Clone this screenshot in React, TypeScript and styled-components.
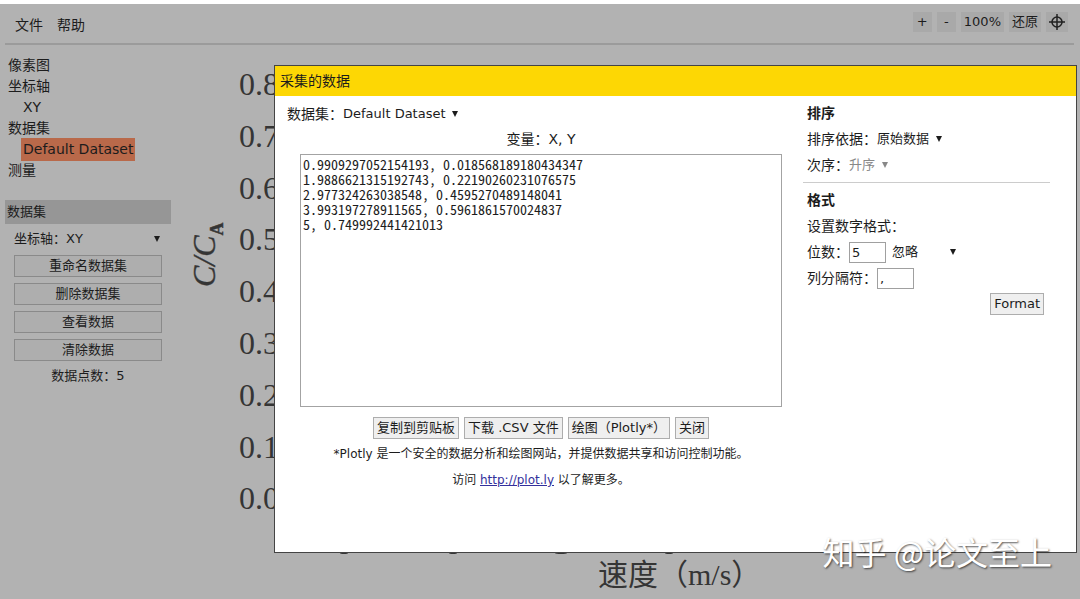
import React from "react";
import styled, { createGlobalStyle } from "styled-components";

const GlobalStyle = createGlobalStyle`
  *, *::before, *::after { box-sizing: border-box; }
  body {
    margin: 0;
    background: #fff;
    color: #1c1c1c;
    font-family: "DejaVu Sans", "Noto Sans CJK SC", sans-serif;
    font-size: 14px;
    line-height: 20px;
  }
  button, select, input, textarea { font-family: inherit; color: inherit; margin: 0; }
`;

const Page = styled.div`
  position: relative;
  display: flex;
  flex-direction: column;
  min-height: 100vh;
  border-top: 4px solid #fff;
  background: #b2b2b2;
  overflow: hidden;
`;

const TopBar = styled.header`
  display: flex;
  justify-content: space-between;
  align-items: flex-start;
  height: 41px;
  margin: 0 6px 0 5px;
  padding: 8px 6px 0 10px;
  border-bottom: 2px solid #9b9b9b;
`;

const Menu = styled.nav`
  display: flex;
  gap: 14px;
  padding-top: 3px;
`;

const MenuItem = styled.button`
  padding: 0;
  border: 0;
  background: none;
  font-size: 14px;
  line-height: 20px;
`;

const ZoomTools = styled.div`
  display: flex;
  gap: 5px;
`;

const ToolButton = styled.button`
  display: flex;
  align-items: center;
  justify-content: center;
  min-width: 19px;
  height: 20px;
  padding: 0 3px;
  border: 0;
  background: #a9a9a9;
  font-size: 13px;
  line-height: 20px;
`;

const Workspace = styled.main`
  display: flex;
  flex: 1;
`;

const Sidebar = styled.aside`
  flex: none;
  width: 178px;
  padding: 10px 7px 0 5px;
`;

const Tree = styled.ul`
  margin: 0;
  padding: 0 0 0 3px;
  list-style: none;
  line-height: 21px;
`;

const TreeItem = styled.li<{ $child?: boolean }>`
  display: flex;
  align-items: center;
  height: 21px;
  padding-left: ${(p) => (p.$child ? 13 : 0)}px;
`;

const TreeLabel = styled.span<{ $active?: boolean }>`
  padding: 1px 2px;
  background: ${(p) => (p.$active ? "#b9694a" : "transparent")};
`;

const PanelTitle = styled.h2`
  margin: 19px 0 4px;
  padding: 0 2px;
  background: #969696;
  font-size: 13px;
  font-weight: 400;
  line-height: 24px;
`;

const PanelBody = styled.div`
  display: flex;
  flex-direction: column;
  gap: 6px;
  padding: 0 9px;
  font-size: 13px;
`;

const AxisRow = styled.div`
  display: flex;
  align-items: center;
  height: 21px;
`;

const PanelButton = styled.button`
  height: 22px;
  padding: 0;
  border: 1px solid #8a8a8a;
  background: #aeaeae;
  font-size: 13px;
  line-height: 20px;
`;

const PointCount = styled.div`
  text-align: center;
  line-height: 18px;
`;

const SelectBox = styled.span<{ $width?: number; $grow?: boolean; $muted?: boolean }>`
  display: inline-grid;
  grid-template-columns: 1fr 10px;
  align-items: center;
  flex: ${(p) => (p.$grow ? 1 : "none")};
  width: ${(p) => (p.$width ? `${p.$width}px` : "auto")};
  color: ${(p) => (p.$muted ? "#888" : "inherit")};

  select {
    grid-area: 1 / 1 / 2 / 3;
    width: 100%;
    padding: 0 14px 0 0;
    border: 0;
    background: none;
    appearance: none;
    font-size: 13px;
    line-height: 20px;
    opacity: 1;
  }

  svg {
    grid-area: 1 / 2 / 2 / 3;
    pointer-events: none;
  }
`;

const Plot = styled.svg`
  flex: none;
  display: block;
  width: 900px;
  height: 554px;
  font-family: "Liberation Serif", "Noto Sans CJK SC", serif;
  font-size: 32px;
  fill: #353535;
`;

const Dialog = styled.section`
  position: absolute;
  top: 61px;
  left: 274px;
  right: 3px;
  min-height: 488px;
  border: 1px solid #444;
  background: #fff;
`;

const DialogTitle = styled.h1`
  margin: 0;
  padding: 0 5px;
  background: #fdd704;
  font-size: 14px;
  font-weight: 400;
  line-height: 30px;
`;

const DialogBody = styled.div`
  display: flex;
  gap: 21px;
  padding: 5px 26px 0 12px;
`;

const DataColumn = styled.div`
  flex: 1;
  min-width: 0;
`;

const OptionsColumn = styled.div`
  flex: none;
  width: 247px;
`;

const Row = styled.div`
  display: flex;
  align-items: center;
  height: 26px;
`;

const DataArea = styled.div`
  display: flex;
  flex-direction: column;
  align-items: center;
  padding-left: 13px;
  line-height: 24px;
`;

const DataText = styled.textarea`
  display: block;
  width: 100%;
  height: 253px;
  margin-top: 3px;
  padding: 2px;
  border: 1px solid #a3a3a3;
  resize: none;
  font-family: "Noto Sans Mono CJK SC", "Liberation Mono", monospace;
  font-size: 14px;
  line-height: 15px;
`;

const Actions = styled.div`
  display: flex;
  gap: 5px;
  padding: 10px 0 2px;
`;

const ActionButton = styled.button`
  height: 22px;
  padding: 0 3px;
  border: 1px solid #adadad;
  background: #efefef;
  font-size: 13px;
  line-height: 20px;
  white-space: nowrap;
`;

const Note = styled.p`
  margin: 0;
  font-size: 12px;
  line-height: 26px;

  a { color: #33309c; }
`;

const Options = styled.fieldset`
  margin: 0;
  padding: 0 4px;
  border: 0;

  & + & {
    margin-top: 4px;
    padding-top: 5px;
    border-top: 1px solid #ccc;
  }
`;

const OptionsTitle = styled.h3`
  margin: 0;
  font-size: 14px;
  font-weight: 700;
  line-height: 25px;
`;

const SmallInput = styled.input`
  width: 37px;
  height: 21px;
  padding: 0 2px;
  border: 1px solid #a0a0a0;
  background: #fff;
  font-size: 13px;
`;

const Spacer = styled.span`
  width: 6px;
`;

const OptionsFooter = styled.div`
  display: flex;
  justify-content: flex-end;
  padding: 2px 2px 0;
`;

const Watermark = styled.div`
  position: absolute;
  right: 28px;
  bottom: 25px;
  color: #fff;
  font-family: "Noto Sans CJK SC", sans-serif;
  font-size: 32px;
  line-height: 46px;
  text-shadow: 1px 1px 2px rgba(0, 0, 0, 0.65);
  white-space: nowrap;
`;

const Arrow = () => (
  <svg width="10" height="10" viewBox="0 0 10 10" aria-hidden="true">
    <path d="M2 2h6L5 8z" fill="currentColor" />
  </svg>
);

type PickerProps = {
  id: string;
  options: string[];
  width?: number;
  grow?: boolean;
  muted?: boolean;
};

const Picker = ({ id, options, width, grow, muted }: PickerProps) => (
  <SelectBox $width={width} $grow={grow} $muted={muted}>
    <select id={id} disabled={muted}>
      {options.map((o) => (
        <option key={o}>{o}</option>
      ))}
    </select>
    <Arrow />
  </SelectBox>
);

const ticks = ["0.8", "0.7", "0.6", "0.5", "0.4", "0.3", "0.2", "0.1", "0.0"];

const data = `0.9909297052154193, 0.018568189180434347
1.9886621315192743, 0.22190260231076575
2.977324263038548, 0.4595270489148041
3.993197278911565, 0.5961861570024837
5, 0.749992441421013`;

export default function App() {
  return (
    <>
      <GlobalStyle />
      <Page>
        <TopBar>
          <Menu>
            <MenuItem>文件</MenuItem>
            <MenuItem>帮助</MenuItem>
          </Menu>
          <ZoomTools>
            <ToolButton>+</ToolButton>
            <ToolButton>-</ToolButton>
            <ToolButton>100%</ToolButton>
            <ToolButton>还原</ToolButton>
            <ToolButton aria-label="crosshair">
              <svg width="16" height="16" viewBox="0 0 16 16" fill="none" stroke="#222" strokeWidth="1.5">
                <circle cx="8" cy="8" r="5" />
                <path d="M8 0v16M0 8h16" />
              </svg>
            </ToolButton>
          </ZoomTools>
        </TopBar>
        <Workspace>
          <Sidebar>
            <Tree>
              <TreeItem>像素图</TreeItem>
              <TreeItem>坐标轴</TreeItem>
              <TreeItem $child><TreeLabel>XY</TreeLabel></TreeItem>
              <TreeItem>数据集</TreeItem>
              <TreeItem $child><TreeLabel $active>Default Dataset</TreeLabel></TreeItem>
              <TreeItem>测量</TreeItem>
            </Tree>
            <PanelTitle>数据集</PanelTitle>
            <PanelBody>
              <AxisRow>
                <label htmlFor="axis">坐标轴：</label>
                <Picker id="axis" options={["XY"]} grow />
              </AxisRow>
              <PanelButton>重命名数据集</PanelButton>
              <PanelButton>删除数据集</PanelButton>
              <PanelButton>查看数据</PanelButton>
              <PanelButton>清除数据</PanelButton>
              <PointCount>数据点数：5</PointCount>
            </PanelBody>
          </Sidebar>
          <Plot viewBox="178 45 900 554">
            {ticks.map((t, i) => (
              <text key={t} x="239" y={95 + Math.round(i * 51.8)}>{t}</text>
            ))}
            <text transform="translate(215 287) rotate(-90)" stroke="#353535" strokeWidth="0.4">
              <tspan fontStyle="italic">C/C</tspan>
              <tspan dy="8" fontSize="18" fontWeight="700">A</tspan>
            </text>
            <text x="598" y="585" fontSize="30">速度（m/s）</text>
            <g>
              <ellipse cx="344" cy="553" rx="4" ry="1" />
              <ellipse cx="453" cy="553" rx="4" ry="1" />
              <ellipse cx="561" cy="553" rx="6" ry="1" />
              <ellipse cx="669" cy="553" rx="4" ry="1" />
            </g>
          </Plot>
        </Workspace>

        <Dialog role="dialog" aria-labelledby="dialog-title">
          <DialogTitle id="dialog-title">采集的数据</DialogTitle>
          <DialogBody>
            <DataColumn>
              <Row>
                <label htmlFor="dataset">数据集：</label>
                <Picker id="dataset" options={["Default Dataset"]} />
              </Row>
              <DataArea>
                <label htmlFor="values">变量：X, Y</label>
                <DataText id="values" defaultValue={data} spellCheck={false} />
                <Actions>
                  <ActionButton>复制到剪贴板</ActionButton>
                  <ActionButton>下载 .CSV 文件</ActionButton>
                  <ActionButton>绘图（Plotly*）</ActionButton>
                  <ActionButton>关闭</ActionButton>
                </Actions>
                <Note>*Plotly 是一个安全的数据分析和绘图网站，并提供数据共享和访问控制功能。</Note>
                <Note>
                  访问 <a href="http://plot.ly">http://plot.ly</a> 以了解更多。
                </Note>
              </DataArea>
            </DataColumn>
            <OptionsColumn>
              <Options>
                <OptionsTitle>排序</OptionsTitle>
                <Row>
                  <label htmlFor="sort-by">排序依据：</label>
                  <Picker id="sort-by" options={["原始数据"]} />
                </Row>
                <Row>
                  <label htmlFor="order">次序：</label>
                  <Picker id="order" options={["升序"]} muted />
                </Row>
              </Options>
              <Options>
                <OptionsTitle>格式</OptionsTitle>
                <Row>设置数字格式：</Row>
                <Row>
                  <label htmlFor="digits">位数：</label>
                  <SmallInput id="digits" defaultValue="5" />
                  <Spacer />
                  <Picker id="rounding" options={["忽略"]} width={66} />
                </Row>
                <Row>
                  <label htmlFor="separator">列分隔符：</label>
                  <SmallInput id="separator" defaultValue="," />
                </Row>
                <OptionsFooter>
                  <ActionButton>Format</ActionButton>
                </OptionsFooter>
              </Options>
            </OptionsColumn>
          </DialogBody>
        </Dialog>
        <Watermark>知乎 @论文至上</Watermark>
      </Page>
    </>
  );
}
